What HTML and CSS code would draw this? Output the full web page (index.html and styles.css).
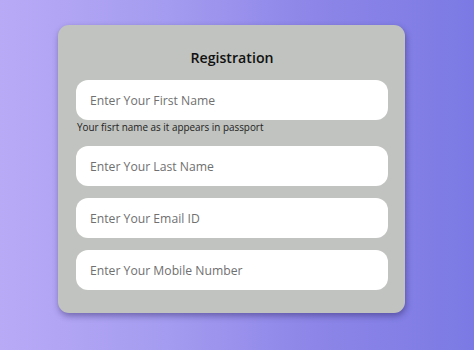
FILE: index.html
```html
<!DOCTYPE html>
<html lang="en">
<head>
<meta charset="utf-8">
<title>Registration</title>
<link rel="stylesheet" href="styles.css">
</head>
<body>
<div class="page">
  <div class="card">
    <h2 class="title">Registration</h2>
    <div class="field">
      <input class="input" type="text" placeholder="Enter Your First Name" autofocus>
      <p class="hint">Your fisrt name as it appears in passport</p>
    </div>
    <div class="field">
      <input class="input" type="text" placeholder="Enter Your Last Name">
    </div>
    <div class="field">
      <input class="input" type="email" placeholder="Enter Your Email ID">
    </div>
    <div class="field">
      <input class="input" type="tel" placeholder="Enter Your Mobile Number">
    </div>
  </div>
</div>
</body>
</html>
```
FILE: styles.css
```css
html, body {
  margin: 0;
  padding: 0;
}
body {
  width: 474px;
  height: 350px;
  overflow: hidden;
  background: linear-gradient(90deg, #b9aaf6 0%, #a49cf0 35%, #8e86e8 65%, #7b7ae4 100%);
  font-family: "Open Sans", "DejaVu Sans", sans-serif;
}
.page {
  padding: 25px 0 0 58px;
}
.card {
  box-sizing: border-box;
  width: 347px;
  height: 288px;
  background: #c0c3bf;
  border-radius: 11px;
  padding: 21px 17px 0 18px;
  box-shadow: 1px 3px 6px rgba(40, 30, 90, 0.45);
  display: flex;
  flex-direction: column;
  gap: 12px;
}
.title {
  margin: 0 0 -2px 0;
  font-size: 14.2px;
  line-height: 24px;
  font-weight: 600;
  text-align: center;
  color: #111;
}
.field {
  display: flex;
  flex-direction: column;
}
.input {
  box-sizing: border-box;
  width: 312px;
  height: 40px;
  border: none;
  border-radius: 12px;
  background: #fff;
  padding: 0 14px;
  font-family: "Open Sans", "DejaVu Sans", sans-serif;
  font-size: 12.2px;
  color: #333;
  outline: none;
  caret-color: #333;
}
.input::placeholder {
  color: #707070;
}
.hint {
  margin: 0 0 -1px 0;
  padding-left: 1px;
  font-size: 9.9px;
  line-height: 15px;
  color: #222;
}
```
